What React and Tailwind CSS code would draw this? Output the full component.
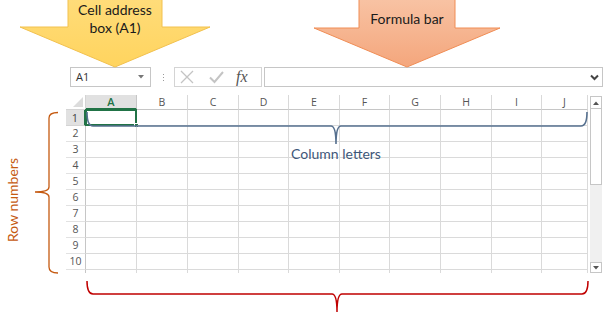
import React from 'react';

const cols = ['A', 'B', 'C', 'D', 'E', 'F', 'G', 'H', 'I', 'J'];
const rows = [1, 2, 3, 4, 5, 6, 7, 8, 9, 10];

const Toolbar = () => (
  <div className="flex items-stretch h-[20px] pl-[70px] pt-0">
    <div className="w-[81px] border border-[#c6c6c6] flex items-center justify-between pl-[5px] pr-[6px] text-[11px] text-[#333] font-['Open_Sans',sans-serif]">
      <span>A1</span>
      <svg width="6" height="4" viewBox="0 0 6 4"><path d="M0 0 L6 0 L3 3.5 Z" fill="#777" /></svg>
    </div>
    <div className="ml-[11px] w-[3px] flex flex-col items-center justify-center gap-[2px]">
      <div className="w-[1px] h-[1px] bg-[#9a9a9a]" />
      <div className="w-[1px] h-[1px] bg-[#9a9a9a]" />
      <div className="w-[1px] h-[1px] bg-[#9a9a9a]" />
    </div>
    <div className="ml-[9px] w-[88px] border border-[#d4d4d4] flex items-center pl-[5px]">
      <svg width="14" height="14" viewBox="0 0 14 14">
        <path d="M1 1 L13 13 M13 1 L1 13" stroke="#c4c4c4" strokeWidth="1.3" />
      </svg>
      <svg width="15" height="14" viewBox="0 0 15 14" className="ml-[15px]">
        <path d="M1 7.5 L5.5 12 L14 2" stroke="#c4c4c4" strokeWidth="2" fill="none" />
      </svg>
      <span className="ml-[12px] font-['Liberation_Serif',serif] italic text-[16px] leading-none text-[#555] -mt-[1px]">fx</span>
    </div>
    <div className="ml-[2px] w-[339px] border border-[#c6c6c6] flex items-center justify-end pr-[3px]">
      <svg width="9" height="7" viewBox="0 0 9 7"><path d="M1 1.5 L4.5 5 L8 1.5" stroke="#444" strokeWidth="2" fill="none" /></svg>
    </div>
  </div>
);

const Sheet = () => (
  <div className="flex mt-[8px] pl-[66px]">
    <div className="grid grid-cols-[20px_51px_51px_51px_50px_51px_50px_51px_51px_50px_46px] grid-rows-[15px_repeat(10,16px)_3px] font-['Open_Sans',sans-serif]">
      <div className="relative border-r border-b border-[#d4d4d4]">
        <svg className="absolute right-[2px] bottom-[2px]" width="10" height="10" viewBox="0 0 10 10">
          <path d="M10 0 L10 10 L0 10 Z" fill="#dcdcdc" />
        </svg>
      </div>
      {cols.map((c) =>
        c === 'A' ? (
          <div key={c} className="bg-[#e1e1e1] border-b-2 border-[#217346] border-r border-r-[#c6c6c6] flex items-center justify-center text-[11px] font-semibold text-[#217346] leading-none">
            {c}
          </div>
        ) : (
          <div key={c} className="border-r border-[#d9d9d9] border-b border-b-[#c6c6c6] flex items-center justify-center text-[10.5px] text-[#555] leading-none">
            {c}
          </div>
        )
      )}
      {rows.map((r) => (
        <React.Fragment key={r}>
          <div
            className={
              r === 1
                ? 'bg-[#e1e1e1] border-r-2 border-[#217346] border-b border-b-[#d4d4d4] flex items-center justify-center text-[11px] text-[#444] leading-none'
                : 'border-r border-[#c6c6c6] border-b border-b-[#e2e2e2] flex items-center justify-center text-[10.5px] text-[#555] leading-none'
            }
          >
            {r}
          </div>
          {cols.map((c) => (
            <div key={c} className="relative border-r border-b border-[#dadada]">
              {r === 1 && c === 'A' && (
                <div className="absolute -left-[1px] -top-[1px] w-[52px] h-[17px] border-2 border-[#217346]">
                  <div className="absolute -right-[4px] -bottom-[4px] w-[5px] h-[5px] bg-[#217346] border border-white" />
                </div>
              )}
            </div>
          ))}
        </React.Fragment>
      ))}
      <div className="border-r border-[#c6c6c6]" />
      {cols.map((c) => (
        <div key={c} className="border-r border-[#dadada]" />
      ))}
    </div>
    <div className="ml-[2px] mt-[1px] w-[12px] h-[177px] flex flex-col bg-[#f0f0f0]">
      <div className="h-[13px] bg-white border border-[#c6c6c6] flex items-center justify-center">
        <svg width="6" height="4" viewBox="0 0 6 4"><path d="M0 4 L6 4 L3 0.5 Z" fill="#555" /></svg>
      </div>
      <div className="h-[76px] bg-white border border-t-0 border-[#c6c6c6]" />
      <div className="flex-1" />
      <div className="h-[11px] bg-white border border-[#c6c6c6] flex items-center justify-center">
        <svg width="6" height="4" viewBox="0 0 6 4"><path d="M0 0 L6 0 L3 3.5 Z" fill="#555" /></svg>
      </div>
    </div>
  </div>
);

const Annotations = () => (
  <svg className="absolute inset-0 pointer-events-none" width="610" height="320" viewBox="0 0 610 320">
    <defs>
      <linearGradient id="yel" x1="0" y1="0" x2="0" y2="1">
        <stop offset="0" stopColor="#ffdc7a" />
        <stop offset="1" stopColor="#ffd45e" />
      </linearGradient>
      <linearGradient id="org" x1="0" y1="0" x2="0" y2="1">
        <stop offset="0" stopColor="#f8c3a4" />
        <stop offset="1" stopColor="#f4a67c" />
      </linearGradient>
    </defs>
    <polygon points="68,-2 162,-2 162,27 210,27 115,67 20,27 68,27" fill="url(#yel)" stroke="#f2c14e" strokeWidth="1" />
    <polygon points="359,-2 455,-2 455,28 500,28 407,67 314,28 359,28" fill="url(#org)" stroke="#f08d55" strokeWidth="1" />
    <path d="M58,112.5 Q49,112.5 49,118 L49,187 Q49,192 35,192 Q49,192 49,197 L49,267 Q49,273 58,273" fill="none" stroke="#c55a11" strokeWidth="1.3" />
    <path d="M87,112 Q87,126 93,126 L331,126 Q336,126 336,144 Q336,126 341,126 L581,126 Q587,126 587,112" fill="none" stroke="#56708f" strokeWidth="1.6" />
    <path d="M87,281 Q87,294 93,294 L332,294 Q337,294 337,312 Q337,294 342,294 L582,294 Q588,294 588,281" fill="none" stroke="#c00000" strokeWidth="1.5" />
  </svg>
);

export default function App() {
  return (
    <div className="relative w-[610px] h-[320px] bg-white overflow-hidden">
      <div className="pt-[67px]">
        <Toolbar />
        <Sheet />
      </div>
      <Annotations />
      <div className="absolute left-[68px] top-[1px] w-[94px] text-center text-[14px] leading-[18px] text-[#1a1a1a] font-['Lato',sans-serif]">
        Cell address
        <br />
        box (A1)
      </div>
      <div className="absolute left-[359px] top-[10px] w-[96px] text-center text-[14px] leading-[18px] text-[#1a1a1a] font-['Lato',sans-serif]">
        Formula bar
      </div>
      <div className="absolute left-[290px] top-[145px] w-[92px] text-center text-[14px] leading-[18px] text-[#3e5779] font-['Lato',sans-serif]">
        Column letters
      </div>
      <div className="absolute left-[-32px] top-[191px] w-[90px] text-center whitespace-nowrap text-[14px] leading-[18px] text-[#c55a11] font-['Lato',sans-serif] -rotate-90">
        Row numbers
      </div>
    </div>
  );
}
